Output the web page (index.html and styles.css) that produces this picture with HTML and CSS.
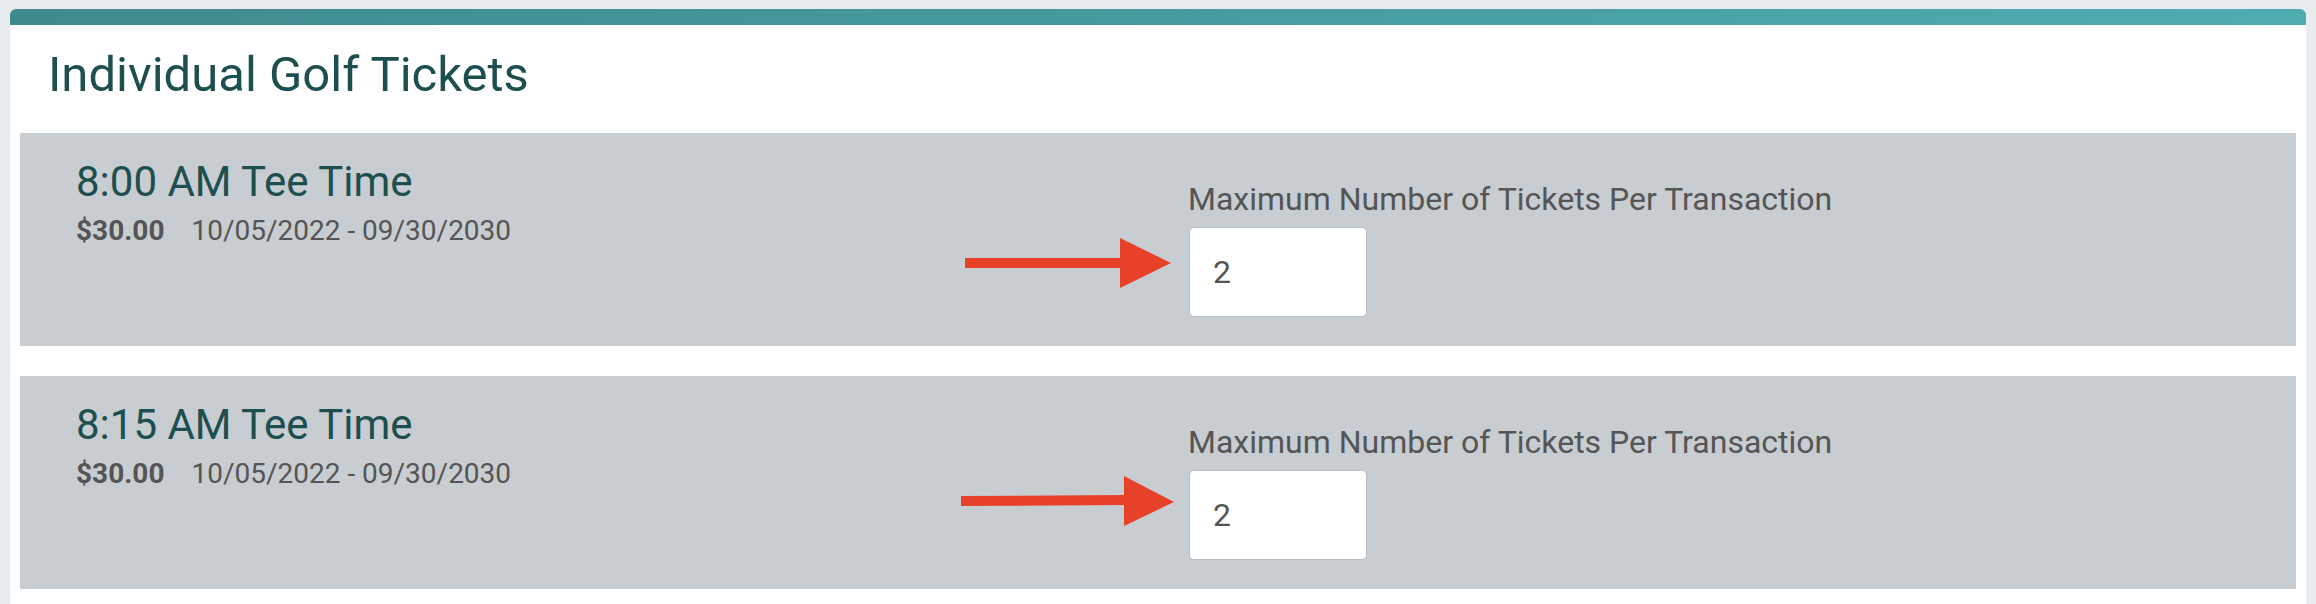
FILE: index.html
```html
<!DOCTYPE html>
<html lang="en">
<head>
<meta charset="utf-8">
<title>Individual Golf Tickets</title>
<link rel="stylesheet" href="styles.css">
</head>
<body>
  <section class="card">
    <div class="card-bar"></div>
    <h1 class="card-title">Individual Golf Tickets</h1>
    <div class="ticket-list">
      <div class="ticket">
        <div class="ticket-info">
          <h2 class="ticket-name">8:00 AM Tee Time</h2>
          <div class="ticket-meta"><span class="ticket-price">$30.00</span><span class="ticket-dates">10/05/2022 - 09/30/2030</span></div>
        </div>
        <div class="ticket-field">
          <label class="field-label" for="max1">Maximum Number of Tickets Per Transaction</label>
          <input class="field-input" id="max1" type="text" value="2">
        </div>
        <svg class="annot-arrow arrow-one" width="208" height="52" viewBox="0 0 208 52" aria-hidden="true">
          <rect x="1" y="21" width="158" height="10" fill="#e8412a"/>
          <polygon points="156,1 207,26 156,51" fill="#e8412a"/>
        </svg>
      </div>
      <div class="ticket">
        <div class="ticket-info">
          <h2 class="ticket-name">8:15 AM Tee Time</h2>
          <div class="ticket-meta"><span class="ticket-price">$30.00</span><span class="ticket-dates">10/05/2022 - 09/30/2030</span></div>
        </div>
        <div class="ticket-field">
          <label class="field-label" for="max2">Maximum Number of Tickets Per Transaction</label>
          <input class="field-input" id="max2" type="text" value="2">
        </div>
        <svg class="annot-arrow arrow-two" width="216" height="52" viewBox="0 0 216 52" aria-hidden="true">
          <polygon points="1,21 166,20 166,30 1,31" fill="#e8412a"/>
          <polygon points="164,1 214,27 164,51" fill="#e8412a"/>
        </svg>
      </div>
    </div>
  </section>
</body>
</html>
```

FILE: styles.css
```css
html, body {
  margin: 0;
  padding: 0;
}

body {
  background: #e8ecef;
  padding: 9px 10px 0 10px;
  font-family: Roboto, "Liberation Sans", Arial, sans-serif;
  color: #555555;
}

.card {
  background: #ffffff;
  border-radius: 6px 6px 0 0;
  padding: 0 10px 20px 10px;
  min-height: 600px;
}

.card-bar {
  height: 16px;
  margin: 0 -10px;
  border-radius: 6px 6px 0 0;
  background: linear-gradient(90deg, #3e8a8c 0%, #4eacb3 100%);
}

.card-title {
  margin: 20px 0 28px 0;
  padding-left: 28px;
  font-size: 49px;
  line-height: 60px;
  font-weight: 400;
  color: #1e4f4f;
}

.ticket-list {
  display: flex;
  flex-direction: column;
  gap: 30px;
}

.ticket {
  position: relative;
  display: grid;
  grid-template-columns: 1112px 1fr;
  align-items: start;
  background: #c8cdd1;
  padding: 24px 56px 29px 56px;
}

.ticket-name {
  margin: 0;
  font-size: 42px;
  line-height: 50px;
  font-weight: 400;
  color: #1e4f4f;
}

.ticket-meta {
  margin-top: 7px;
  font-size: 28px;
  line-height: 34px;
  color: #555555;
}

.ticket-price {
  font-weight: 700;
  margin-right: 27px;
}

.ticket-field {
  display: flex;
  flex-direction: column;
  align-items: flex-start;
  padding-top: 22px;
}

.field-label {
  font-size: 32px;
  line-height: 40px;
  color: #555555;
  margin-bottom: 8px;
}

.field-input {
  box-sizing: border-box;
  width: 178px;
  height: 90px;
  margin: 0 0 0 1px;
  padding: 0 0 0 23px;
  border: 1px solid #b9bdc0;
  border-radius: 5px;
  background: #ffffff;
  font-family: Roboto, "Liberation Sans", Arial, sans-serif;
  font-size: 32px;
  color: #555555;
  outline: none;
}

.annot-arrow {
  position: absolute;
  display: block;
}

.arrow-one {
  left: 944px;
  top: 104px;
}

.arrow-two {
  left: 940px;
  top: 99px;
}
```
